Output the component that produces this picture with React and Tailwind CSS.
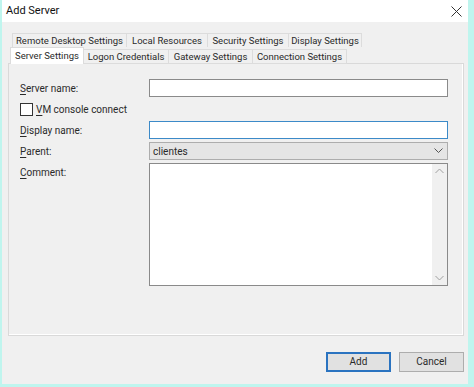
import React from "react";

const rowOne = [
  ["Remote Desktop Settings", "w-[115px]"],
  ["Local Resources", "w-[82px]"],
  ["Security Settings", "w-[82px]"],
  ["Display Settings", "w-[74px]"],
];
const rowTwo = [
  ["Logon Credentials", "w-[86px]"],
  ["Gateway Settings", "w-[85px]"],
  ["Connection Settings", "w-[95px]"],
];

const Label = ({ k, rest }) => (
  <span>
    <span className="underline underline-offset-2">{k}</span>
    {rest}
  </span>
);

export default function App() {
  return (
    <div
      className="w-[474px] h-[387px] bg-[#bff5ee] pl-[2px] pr-[6px] pb-[3px] text-[10px] text-[#2a2a2a]"
      style={{ fontFamily: 'Roboto, "Liberation Sans", Arial, sans-serif' }}
    >
      <div className="h-full flex flex-col bg-[#f0f0f0]">
        {/* title bar */}
        <div className="h-[22px] bg-white flex items-center justify-between pl-[4px] pr-[6px] shrink-0">
          <span className="text-[11px] text-[#111]">Add Server</span>
          <svg width="11" height="11" viewBox="0 0 11 11" className="mt-[1px]">
            <path d="M0.5 0.5 L10.5 10.5 M10.5 0.5 L0.5 10.5" stroke="#333" strokeWidth="1" />
          </svg>
        </div>

        <div className="flex-1 flex flex-col pl-[6px] pr-[4px] pt-[11px]">
          {/* tabs */}
          <div className="flex pl-[4px] h-[14px] items-end text-[9.5px]">
            {rowOne.map(([t, w]) => (
              <div key={t} className={`${w} h-[14px] border border-b-0 border-[#dcdcdc] -ml-px first:ml-0 flex items-center justify-center leading-none bg-[#f0f0f0]`}>
                {t}
              </div>
            ))}
          </div>
          <div className="flex pl-[2px] h-[17px] items-end relative z-10 text-[9.5px]">
            <div className="w-[74px] h-[17px] border border-b-0 border-[#dcdcdc] bg-white flex items-center justify-center leading-none pb-[1px]">
              Server Settings
            </div>
            {rowTwo.map(([t, w]) => (
              <div key={t} className={`${w} h-[15px] border border-[#dcdcdc] -ml-px flex items-center justify-center leading-none bg-[#f0f0f0]`}>
                {t}
              </div>
            ))}
          </div>

          {/* panel */}
          <div className="h-[273px] border border-[#d9d9d9] bg-[#f0f0f0] -mt-px pt-[15px] pl-[11px] pr-[15px] shadow-[inset_-1px_-1px_0_#fff]">
            <div className="grid grid-cols-[129px_1fr] gap-y-[3px]">
              <div className="h-[18px] flex items-center"><Label k="S" rest="erver name:" /></div>
              <div className="h-[18px] border border-[#8a8a8a] bg-white" />

              <div className="col-span-2 h-[18px] flex items-center gap-[3px]">
                <span className="w-[13px] h-[13px] border border-[#333] bg-white inline-block" />
                <Label k="V" rest="M console connect" />
              </div>

              <div className="h-[18px] flex items-center"><Label k="D" rest="isplay name:" /></div>
              <div className="h-[18px] border border-[#3c8ac8] bg-white" />

              <div className="h-[18px] flex items-center"><Label k="P" rest="arent:" /></div>
              <div className="h-[18px] border border-[#adadad] bg-[#e5e5e5] flex items-center justify-between pl-[3px] pr-[4px]">
                <span>clientes</span>
                <svg width="9" height="6" viewBox="0 0 9 6">
                  <path d="M0.5 0.5 L4.5 4.5 L8.5 0.5" stroke="#555" fill="none" />
                </svg>
              </div>

              <div className="h-[18px] flex items-start pt-[2px]"><Label k="C" rest="omment:" /></div>
              <div className="h-[123px] border border-[#8a8a8a] bg-white flex justify-end">
                <div className="w-[15px] bg-[#f0f0f0] flex flex-col justify-between items-center py-[4px]">
                  <svg width="9" height="6" viewBox="0 0 9 6">
                    <path d="M0.5 5 L4.5 1 L8.5 5" stroke="#a0a0a0" fill="none" />
                  </svg>
                  <svg width="9" height="6" viewBox="0 0 9 6">
                    <path d="M0.5 1 L4.5 5 L8.5 1" stroke="#a0a0a0" fill="none" />
                  </svg>
                </div>
              </div>
            </div>
          </div>

          {/* buttons */}
          <div className="flex justify-end gap-[8px] mt-[16px]">
            <button className="w-[65px] h-[20px] border-2 border-[#2a73c0] bg-[#e1e1e1] leading-none">Add</button>
            <button className="w-[65px] h-[20px] border border-[#adadad] bg-[#e1e1e1] leading-none">Cancel</button>
          </div>
        </div>
      </div>
    </div>
  );
}
